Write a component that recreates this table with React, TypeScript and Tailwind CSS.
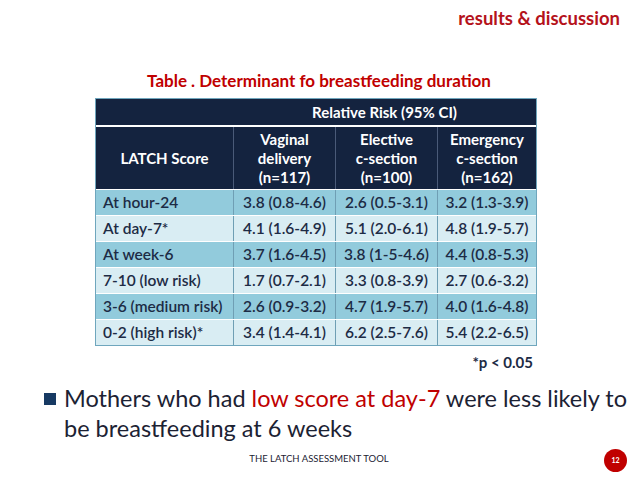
const rows = [
  ["At hour-24", "3.8 (0.8-4.6)", "2.6 (0.5-3.1)", "3.2 (1.3-3.9)"],
  ["At day-7*", "4.1 (1.6-4.9)", "5.1 (2.0-6.1)", "4.8 (1.9-5.7)"],
  ["At week-6", "3.7 (1.6-4.5)", "3.8 (1-5-4.6)", "4.4 (0.8-5.3)"],
  ["7-10 (low risk)", "1.7 (0.7-2.1)", "3.3 (0.8-3.9)", "2.7 (0.6-3.2)"],
  ["3-6 (medium risk)", "2.6 (0.9-3.2)", "4.7 (1.9-5.7)", "4.0 (1.6-4.8)"],
  ["0-2 (high risk)*", "3.4 (1.4-4.1)", "6.2 (2.5-7.6)", "5.4 (2.2-6.5)"],
];

const heads = [
  ["Vaginal", "delivery", "(n=117)"],
  ["Elective", "c-section", "(n=100)"],
  ["Emergency", "c-section", "(n=162)"],
];

export default function App() {
  return (
    <div className="relative h-[478px] w-[638px] overflow-hidden bg-white font-['Lato',sans-serif] text-[#1d2b45]">
      {/* heading */}
      <div className="flex justify-end pr-[18px] pt-[5px]">
        <span className="text-[18.5px] font-bold text-[#b5121b]">results &amp; discussion</span>
      </div>

      <h2 className="mt-[35px] text-center text-[17px] font-bold text-[#c00000]">
        Table . Determinant fo breastfeeding duration
      </h2>

      {/* table */}
      <div className="ml-[95px] mt-[5px] w-[442px] border border-[#6fa6bd]">
        <div className="flex h-[26px] items-center bg-[#14233f] pl-[137px]">
          <span className="w-[304px] text-center text-[15px] font-bold text-white">Relative Risk (95% CI)</span>
        </div>
        <div className="grid h-[64px] grid-cols-[137px_102px_102px_1fr] border-t-2 border-white bg-[#14233f] text-[15px] font-bold leading-[19px] text-white">
          <div className="flex items-center justify-center">LATCH Score</div>
          {heads.map((h) => (
            <div key={h[0]} className="flex flex-col items-center justify-center border-l border-[#4a5a78]">
              {h.map((t) => (
                <span key={t}>{t}</span>
              ))}
            </div>
          ))}
        </div>
        {rows.map((r, i) => (
          <div
            key={r[0]}
            className={`grid h-[26px] grid-cols-[137px_102px_102px_1fr] border-t border-white text-[15.5px] font-semibold ${
              i % 2 === 0 ? "bg-[#92cbdc]" : "bg-[#d9edf3]"
            }`}
          >
            <div className="flex items-center whitespace-nowrap pl-[7px]">{r[0]}</div>
            {r.slice(1).map((c, j) => (
              <div key={j} className="flex items-center justify-center whitespace-nowrap border-l border-[#6f9fb4]">
                {c}
              </div>
            ))}
          </div>
        ))}
      </div>

      <div className="mt-[5px] w-[533px] text-right text-[15px] font-bold text-[#1d2b45]">*p &lt; 0.05</div>

      {/* bullet */}
      <div className="ml-[44px] mt-[9px] flex w-[590px] gap-[8px]">
        <span className="mt-[10px] h-[12px] w-[12px] shrink-0 bg-[#173a63]" />
        <p className="text-[23.5px] leading-[30px] text-[#1c2233]">
          Mothers who had <span className="text-[#c00000]">low score at day-7</span> were less likely to be breastfeeding at 6 weeks
        </p>
      </div>

      {/* footer */}
      <div className="absolute bottom-[12px] left-0 flex w-full items-center">
        <span className="w-full text-center text-[9.5px] text-[#1c2233]">THE LATCH ASSESSMENT TOOL</span>
      </div>
      <div className="absolute bottom-[6px] right-[11px] flex h-[23px] w-[23px] items-center justify-center rounded-full bg-[#c00000] text-[7px] font-bold text-white">
        12
      </div>
    </div>
  );
}
